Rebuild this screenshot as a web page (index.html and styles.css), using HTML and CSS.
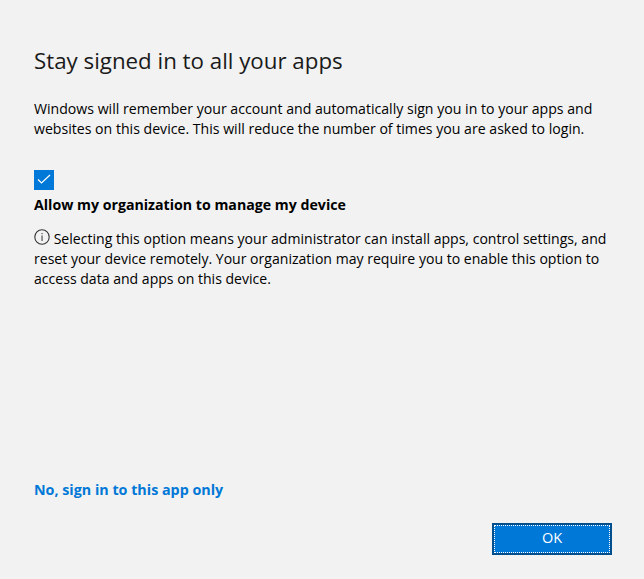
FILE: index.html
```html
<!DOCTYPE html>
<html lang="en">
<head>
<meta charset="utf-8">
<title>Stay signed in</title>
<link rel="stylesheet" href="styles.css">
</head>
<body>
<main class="dialog">
  <div class="content">
    <h1 class="title">Stay signed in to all your apps</h1>
    <p class="desc">Windows will remember your account and automatically sign you in to your apps and websites on this device. This will reduce the number of times you are asked to login.</p>
    <div class="check" role="checkbox" aria-checked="true">
      <svg width="20" height="20" viewBox="0 0 20 20"><path d="M4 9.5 7.5 13 16 5" fill="none" stroke="#fff" stroke-width="1.2"/></svg>
    </div>
    <div class="check-label">Allow my organization to manage my device</div>
    <p class="info"><svg class="info-icon" width="16" height="16" viewBox="0 0 16 16"><circle cx="8" cy="8" r="7.2" fill="none" stroke="#333" stroke-width="1.1"/><rect x="7.5" y="6.5" width="1.1" height="5.5" fill="#444"/><rect x="7.5" y="4" width="1.1" height="1.2" fill="#444"/></svg> Selecting this option means your administrator can install apps, control settings, and reset your device remotely. Your organization may require you to enable this option to access data and apps on this device.</p>
  </div>
  <a class="link" href="#">No, sign in to this app only</a>
  <div class="actions">
    <button class="ok" type="button"><span class="ok-inner">OK</span></button>
  </div>
</main>
</body>
</html>
```
FILE: styles.css
```css
html, body {
  margin: 0;
  height: 100%;
}
body {
  background: #f2f2f2;
  color: #000;
  font-family: "Open Sans", "Noto Sans", sans-serif;
  font-size: 14.12px;
  overflow: hidden;
}
.dialog {
  box-sizing: border-box;
  height: 579px;
  padding: 43px 32px 24px 34px;
  display: flex;
  flex-direction: column;
}
.content {
  flex: 1;
}
.title {
  margin: 0;
  font-size: 22.3px;
  font-weight: 400;
  line-height: 36px;
  color: #1a1a1a;
}
.desc {
  margin: 20px 0 0;
  line-height: 20px;
}
.check {
  margin-top: 31px;
  width: 20px;
  height: 20px;
  background: #0078d7;
}
.check-label {
  margin-top: 5px;
  font-size: 14.18px;
  font-weight: 700;
  line-height: 20px;
}
.info {
  margin: 14px 0 0;
  font-size: 14.07px;
  line-height: 20px;
}
.info-icon {
  vertical-align: -1px;
}
.link {
  color: #0078d7;
  font-size: 14.3px;
  font-weight: 700;
  text-decoration: none;
  line-height: 20px;
  margin-bottom: 23px;
}
.actions {
  display: flex;
  justify-content: flex-end;
}
.ok {
  width: 120px;
  height: 32px;
  padding: 0;
  border: 2px solid #004e8c;
  background: #0078d7;
  color: #fff;
  font: inherit;
  font-size: 14.5px;
  display: flex;
}
.ok-inner {
  flex: 1;
  margin: 0;
  border: 1px dotted #fff;
  line-height: 24px;
  padding-bottom: 2px;
}
```
